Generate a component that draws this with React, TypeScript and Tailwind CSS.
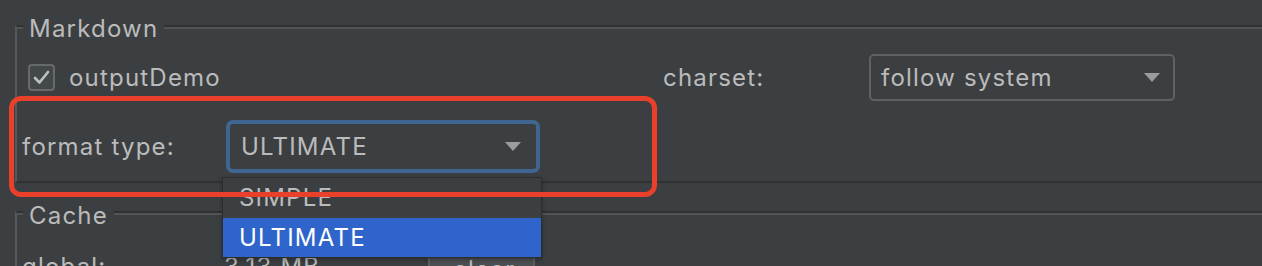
import React from 'react';

const Arrow = () => (
  <svg width="16" height="9" viewBox="0 0 16 9" className="shrink-0">
    <path d="M0 0 H16 L8 9 Z" fill="#9a9c9e" />
  </svg>
);

const Group: React.FC<{ title: string; titleTop: string; className?: string; children?: React.ReactNode }> = ({ title, titleTop, className, children }) => (
  <div
    className={`relative ml-[15px] border-t-2 border-l-2 border-t-[#2f3132] border-l-[#56595b] shadow-[inset_0_2px_0_#515557] ${className ?? ''}`}
  >
    <span className={`absolute ${titleTop} left-[6px] bg-[#3c3f41] px-[6px] text-[24px] leading-[30px] text-[#bbbbbb]`}>
      {title}
    </span>
    {children}
  </div>
);

export default function App() {
  return (
    <div className="relative w-[1262px] h-[266px] overflow-hidden bg-[#3c3f41] pt-[25px] font-['Inter','Noto_Sans',sans-serif] tracking-[1.2px] text-[#bbbbbb]">
      {/* Markdown */}
      <Group
        title="Markdown"
        titleTop="-top-[13px]"
        className="border-b-2 border-b-[#2f3132] shadow-[inset_0_2px_0_#515557,0_2px_0_#515557] pt-[27px] pb-[8px]"
      >
        <div className="flex items-center h-[47px]">
          <div className="flex items-center w-[646px] pl-[11px]">
            <div className="w-[27px] h-[27px] rounded-[4px] border-2 border-[#68696a] bg-[#43494a] flex items-center justify-center">
              <svg width="17" height="15" viewBox="0 0 17 15">
                <path d="M2 8 L6.5 12.5 L15 2" fill="none" stroke="#c0c0c0" strokeWidth="2.6" strokeLinecap="round" strokeLinejoin="round" />
              </svg>
            </div>
            <span className="ml-[14px] text-[24px] leading-none">outputDemo</span>
          </div>
          <span className="w-[206px] text-[24px] leading-none">charset:</span>
          <div className="w-[306px] h-[47px] rounded-[5px] border-2 border-[#5f6163] flex items-center justify-between pl-[10px] pr-[13px]">
            <span className="text-[24px] leading-none">follow system</span>
            <Arrow />
          </div>
        </div>
        <div className="flex items-center h-[53px] mt-[19px]">
          <span className="w-[209px] pl-[5px] text-[24px] leading-none">format type:</span>
          <div className="w-[314px] h-[53px] rounded-[7px] border-[4px] border-[#3f6590] flex items-center justify-between pl-[11px] pr-[15px]">
            <span className="text-[24px] leading-none">ULTIMATE</span>
            <Arrow />
          </div>
        </div>
      </Group>

      {/* Cache */}
      <Group title="Cache" titleTop="-top-[12px]" className="mt-[28px] h-[80px] pt-[39px]">
        <div className="flex items-start">
          <span className="w-[207px] pl-[5px] text-[24px] leading-[30px]">global:</span>
          <span className="w-[204px] text-[24px] leading-[30px]">3.13 MB</span>
          <div className="w-[107px] h-[40px] mt-[1px] rounded-[5px] border-2 border-[#5e6062] bg-[#4c5052] pl-[23px] text-[24px] leading-[30px]">
            clear
          </div>
        </div>
      </Group>

      {/* open combo popup */}
      <div className="absolute left-[222px] top-[177px] w-[320px] border border-[#2b2d2e] bg-[#3c3f41] shadow-[0_2px_4px_rgba(0,0,0,0.3)]">
        <div className="h-[40px] pl-[16px] flex items-center text-[24px] text-[#bbbbbb]">SIMPLE</div>
        <div className="h-[39px] pl-[16px] flex items-center text-[24px] text-white bg-[#2f65ca]">ULTIMATE</div>
      </div>

      {/* annotation */}
      <div className="absolute left-[9px] top-[96px] w-[648px] h-[101px] rounded-[12px] border-[5px] border-[#e8402a] pointer-events-none" />
    </div>
  );
}
